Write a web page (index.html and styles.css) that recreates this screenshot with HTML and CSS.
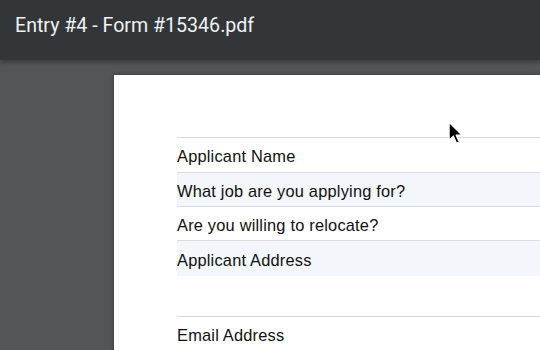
FILE: index.html
```html
<!DOCTYPE html>
<html lang="en">
<head>
    <meta charset="UTF-8">
    <title>Entry #4 - Form #15346.pdf</title>
    <link rel="stylesheet" href="styles.css">
</head>
<body>
    <div class="toolbar">
        <span class="title">Entry #4 - Form #15346.pdf</span>
    </div>

    <div class="viewer">
        <div class="page">
            <div class="fields">
                <div class="field first">Applicant Name</div>
                <div class="field shaded">What job are you applying for?</div>
                <div class="field">Are you willing to relocate?</div>
                <div class="field shaded tall">Applicant Address</div>
                <div class="gap"></div>
                <div class="field">Email Address</div>
            </div>
        </div>
    </div>

    <!-- mouse pointer -->
    <svg class="cursor" width="18" height="26" viewBox="0 0 18 26">
        <path d="M2 2 L2 20.5 L6.3 16.3 L9.4 23.2 L12.3 21.9 L9.3 15.2 L15.3 15.2 Z" fill="#000" stroke="#fff" stroke-width="1.5" stroke-linejoin="round"/>
    </svg>
</body>
</html>
```

FILE: styles.css
```css
body {
    margin: 0;
    width: 540px;
    height: 350px;
    overflow: hidden;
    background: #525659;
    font-family: "Liberation Sans", Arial, sans-serif;
}
.toolbar {
    height: 60px;
    background: #323639;
    display: flex;
    align-items: center;
    padding-left: 15px;
    box-shadow: 0 2px 5px rgba(0,0,0,0.35);
    position: relative;
    z-index: 1;
}
.title {
    font-family: Roboto, sans-serif;
    font-size: 19.6px;
    color: #f1f1f1;
    margin-top: -10px;
}
.viewer {
    padding: 15px 0 0 114px;
}
.page {
    background: #fff;
    height: 300px;
    padding: 62px 0 0 63px;
    box-shadow: 0 0 4px rgba(0,0,0,0.4);
}
.fields {
    display: flex;
    flex-direction: column;
}
.field {
    height: 30px;
    padding-top: 3px;
    border-top: 1px solid #dcdcdc;
    font-size: 16.4px;
    letter-spacing: 0.2px;
    color: #111;
    display: flex;
    align-items: center;
}
.first {
    height: 31px;
}
.shaded {
    background: #f3f6fb;
}
.tall {
    height: 36px;
    align-items: flex-start;
    padding-top: 10px;
    box-sizing: border-box;
}
.gap {
    height: 40px;
}
.cursor {
    position: absolute;
    left: 447px;
    top: 120px;
}
```
